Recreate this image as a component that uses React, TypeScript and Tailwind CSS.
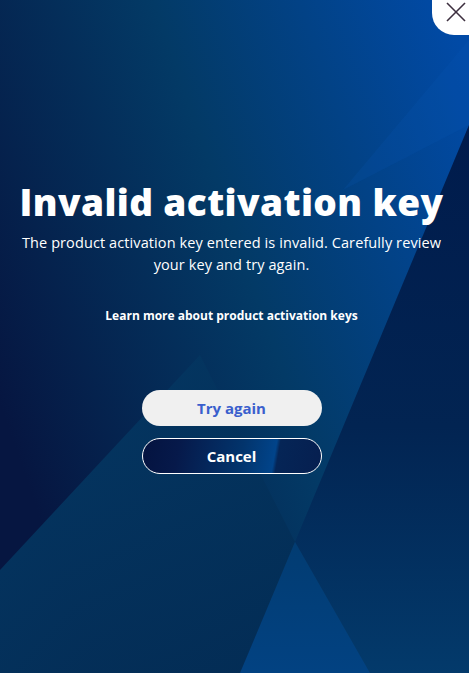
import React from "react";

function Background() {
  return (
    <svg className="absolute inset-0 w-full h-full" viewBox="0 0 469 673" preserveAspectRatio="none">
      <defs>
        <linearGradient id="base" x1="0" y1="0.6" x2="1" y2="0.1">
          <stop offset="0" stopColor="#061641" />
          <stop offset="0.5" stopColor="#033a66" />
          <stop offset="1" stopColor="#014aa6" />
        </linearGradient>
        <linearGradient id="darkR" x1="0" y1="0" x2="0" y2="1">
          <stop offset="0" stopColor="#001b4c" />
          <stop offset="0.55" stopColor="#022452" />
          <stop offset="1" stopColor="#033a6b" />
        </linearGradient>
        <linearGradient id="midL" x1="0" y1="0" x2="1" y2="1">
          <stop offset="0" stopColor="#043a66" />
          <stop offset="1" stopColor="#032c54" />
        </linearGradient>
        <linearGradient id="bright" x1="0" y1="0" x2="0" y2="1">
          <stop offset="0" stopColor="#023c72" />
          <stop offset="1" stopColor="#024282" />
        </linearGradient>
      </defs>
      <rect x="0" y="0" width="469" height="673" fill="url(#base)" />
      <polygon points="469,40 343,190 469,125" fill="#0a5bb8" opacity="0.18" />
      <polygon points="200,355 295,542 240,673 0,673 0,570" fill="url(#midL)" opacity="0.9" />
      <polygon points="469,125 295,542 370,673 469,673" fill="url(#darkR)" />
      <polygon points="295,542 240,673 370,673" fill="url(#bright)" />
    </svg>
  );
}

export default function App() {
  return (
    <div
      className="relative w-[469px] h-[673px] overflow-hidden text-white"
      style={{ fontFamily: '"Open Sans", "Noto Sans", sans-serif' }}
    >
      <Background />
      <button className="absolute top-0 right-0 w-[37px] h-[35px] bg-white rounded-bl-[22px] flex items-start justify-end">
        <svg width="24" height="24" viewBox="0 0 24 24" className="mr-[1px]">
          <line x1="3" y1="3" x2="21" y2="21" stroke="#3d2f3f" strokeWidth="1.6" />
          <line x1="21" y1="3" x2="3" y2="21" stroke="#3d2f3f" strokeWidth="1.6" />
        </svg>
      </button>
      <div className="relative flex flex-col items-center pt-[180px] pl-[16px] pr-[22px]">
        <h1 className="text-[37px] leading-[44px] font-extrabold tracking-[0.4px] text-center whitespace-nowrap">
          Invalid activation key
        </h1>
        <p className="mt-[8px] text-[14.5px] leading-[22px] text-center tracking-[0.1px]">
          The product activation key entered is invalid. Carefully review your key and try again.
        </p>
        <a className="mt-[32px] text-[12px] leading-[16px] font-bold text-center">
          Learn more about product activation keys
        </a>
        <div className="mt-[66px] flex flex-col gap-[12px]">
          <button className="w-[180px] h-[36px] rounded-full bg-[#f0f0f0] text-[#3a5fcd] text-[15px] font-bold">
            Try again
          </button>
          <button className="w-[180px] h-[36px] rounded-full border border-white text-white text-[15px] font-bold bg-[linear-gradient(100deg,#041340_0%,#06194a_20%,#02346c_55%,#01448a_73%,#052556_75%,#061f50_100%)]">
            Cancel
          </button>
        </div>
      </div>
    </div>
  );
}
